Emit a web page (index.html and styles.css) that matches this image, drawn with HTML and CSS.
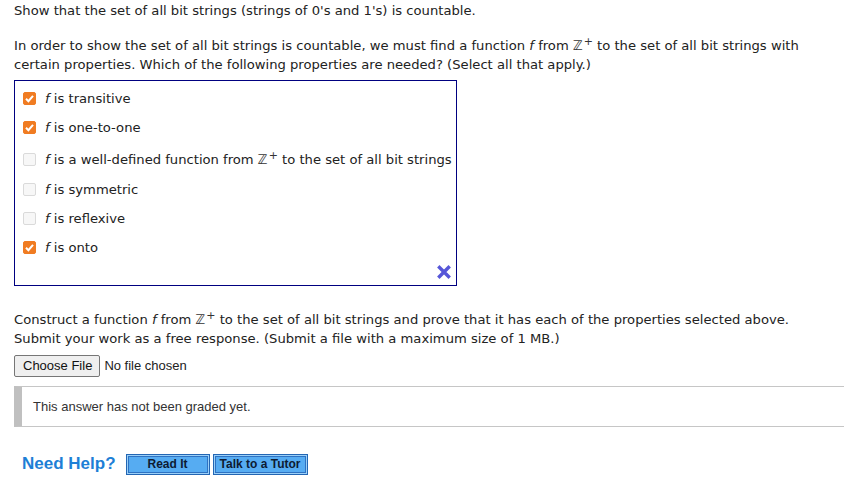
FILE: index.html
```html
<!DOCTYPE html>
<html>
<head>
<meta charset="utf-8">
<link rel="stylesheet" href="styles.css">
</head>
<body>
<div class="page">
  <p class="q">Show that the set of all bit strings (strings of 0's and 1's) is countable.</p>
  <p class="q p2">In order to show the set of all bit strings is countable, we must find a function <i>f</i> from <span class="zz">ℤ<span class="sp">+</span></span> to the set of all bit strings with<br><span>certain properties. Which of the following properties are needed? (Select all that apply.)</span></p>
  <div class="choices">
    <div class="row"><span class="cb on"><svg viewBox="0 0 13 13" width="13" height="13"><path d="M3 6.8 L5.4 9.2 L10 3.8" fill="none" stroke="#fff" stroke-width="2"/></svg></span><span><i>f</i> is transitive</span></div>
    <div class="row"><span class="cb on"><svg viewBox="0 0 13 13" width="13" height="13"><path d="M3 6.8 L5.4 9.2 L10 3.8" fill="none" stroke="#fff" stroke-width="2"/></svg></span><span><i>f</i> is one-to-one</span></div>
    <div class="row tall"><span class="cb"></span><span><i>f</i> is a well-defined function from <span class="zz">ℤ<span class="sp">+</span></span> to the set of all bit strings</span></div>
    <div class="row"><span class="cb"></span><span><i>f</i> is symmetric</span></div>
    <div class="row"><span class="cb"></span><span><i>f</i> is reflexive</span></div>
    <div class="row"><span class="cb on"><svg viewBox="0 0 13 13" width="13" height="13"><path d="M3 6.8 L5.4 9.2 L10 3.8" fill="none" stroke="#fff" stroke-width="2"/></svg></span><span><i>f</i> is onto</span></div>
    <div class="mark"><svg viewBox="0 0 14 14" width="14" height="14"><path d="M2.5 2.5 L11.5 11.5 M11.5 2.5 L2.5 11.5" stroke="#5656d8" stroke-width="3.4" stroke-linecap="square"/></svg></div>
  </div>
  <p class="q p3">Construct a function <i>f</i> from <span class="zz">ℤ<span class="sp">+</span></span> to the set of all bit strings and prove that it has each of the properties selected above.<br><span>Submit your work as a free response. (Submit a file with a maximum size of 1 MB.)</span></p>
  <div class="file"><span class="fbtn">Choose File</span><span class="fnone">No file chosen</span></div>
  <div class="graded">This answer has not been graded yet.</div>
  <div class="help"><span class="need">Need Help?</span><span class="hb hb1">Read It</span><span class="hb hb2">Talk to a Tutor</span></div>
</div>
</body>
</html>
```
FILE: styles.css
```css
html, body { margin: 0; padding: 0; background: #fff; }
body { width: 844px; height: 494px; overflow: hidden; }
.page { padding: 1px 0 0 14px; font-family: "DejaVu Sans", Verdana, sans-serif; font-size: 13.15px; color: #222; }
.q { margin: 0; line-height: 19.5px; }
.p2 { margin-top: 15px; width: 820px; }
i { font-family: "DejaVu Sans", sans-serif; font-style: italic; }
.zz { font-family: "DejaVu Sans", sans-serif; color: #333; }
.sp { display: inline-block; font-size: 11px; line-height: 11px; position: relative; top: -5px; margin-left: 1px; }
.choices { margin-top: 5px; width: 441px; height: 200.5px; border: 1px solid #000080; position: relative; box-sizing: content-box; padding-top: 3.5px; }
.row { display: flex; align-items: center; height: 29px; padding-left: 8px; }
.row.tall { height: 33px; padding-top: 1px; box-sizing: border-box; }
.cb { width: 13px; height: 13px; border: 1px solid #dadada; border-radius: 2px; background: #f7f7f7; margin-right: 9px; box-sizing: border-box; display: inline-flex; flex: none; }
.cb.on { background: #f07c22; border-color: #f07c22; }
.cb svg { display: block; margin: -1px; }
.mark { position: absolute; right: 5px; bottom: 6px; width: 14px; height: 14px; }
.mark svg { display: block; }
.p3 { margin-top: 24px; }
.file { display: flex; align-items: center; margin-top: 6px; font-family: "Liberation Sans", Arial, sans-serif; font-size: 13px; }
.fbtn { display: inline-block; height: 20px; line-height: 19px; padding: 0 7px 0 8px; background: #efefef; border: 1px solid #767676; border-radius: 2px; color: #111; box-sizing: content-box; }
.fnone { margin-left: 4px; color: #222; }
.graded { margin-top: 9px; border-top: 1px solid #c6c6c6; border-bottom: 1px solid #c6c6c6; border-left: 8px solid #c0c0c0; height: 39px; line-height: 39px; padding-left: 11px; font-family: "Liberation Sans", Arial, sans-serif; font-size: 13px; color: #333; }
.help { display: flex; align-items: center; margin-top: 27px; padding-left: 8px; }
.need { font-family: "Liberation Sans", Arial, sans-serif; font-weight: bold; font-size: 17px; color: #1e7fd6; margin-right: 10px; }
.hb { display: inline-block; height: 19px; line-height: 19px; border: 1px solid #2366b4; background: #56acf2; box-shadow: inset 0 0 0 1px #9ad0f8, inset 0 0 0 2px #2f72c2; font-family: "Liberation Sans", Arial, sans-serif; font-weight: bold; font-size: 12px; color: #0d1b33; text-align: center; }
.hb1 { width: 82px; }
.hb2 { width: 93px; margin-left: 3px; }
```
